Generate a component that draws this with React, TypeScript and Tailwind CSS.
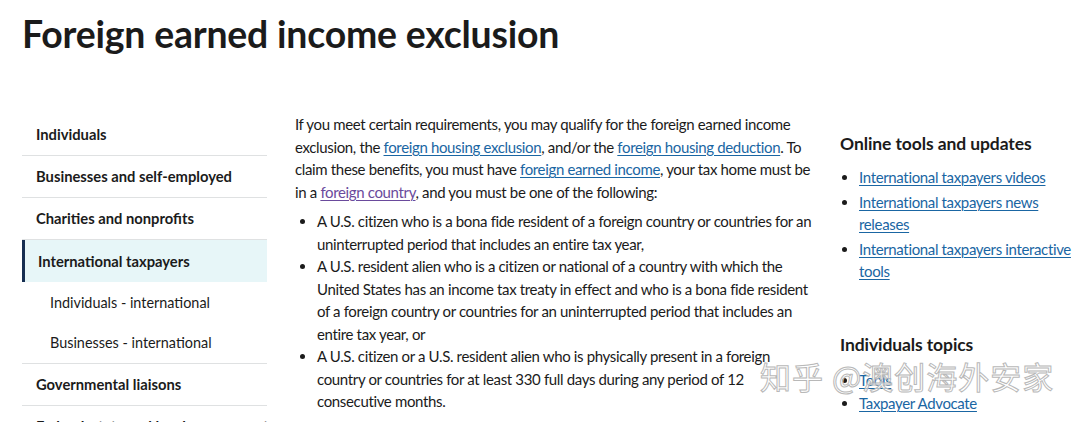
import React from "react";

const font = { fontFamily: "Lato, 'Noto Sans', sans-serif" };

const navItems = [
  { label: "Individuals" },
  { label: "Businesses and self-employed" },
  { label: "Charities and nonprofits" },
  { label: "International taxpayers", active: true },
  { label: "Individuals - international", sub: true },
  { label: "Businesses - international", sub: true, last: true },
  { label: "Governmental liaisons" },
  { label: "Federal, state and local governments" },
];

function A({ children, visited }: { children: React.ReactNode; visited?: boolean }) {
  return (
    <a
      href="#"
      className={`underline underline-offset-2 decoration-1 ${
        visited ? "text-[#6a4a9c]" : "text-[#1a66a3]"
      }`}
    >
      {children}
    </a>
  );
}

function SideNav() {
  return (
    <nav className="w-[245px] shrink-0">
      {navItems.map((it, i) => {
        if (it.sub) {
          return (
            <div
              key={i}
              className={`h-[41px] flex items-center pl-[28px] text-[14.4px] text-[#1b1b1b] whitespace-nowrap ${
                it.last ? "border-b border-[#dfe1e2]" : ""
              }`}
            >
              {it.label}
            </div>
          );
        }
        return (
          <div
            key={i}
            className={`h-[42px] flex items-center text-[14.75px] font-bold text-[#1b1b1b] whitespace-nowrap ${
              it.active
                ? "bg-[#e7f6f8] border-l-[3px] border-[#162e51] pl-[13px]"
                : "pl-[14px] border-b border-[#dfe1e2]"
            }`}
          >
            {it.label}
          </div>
        );
      })}
    </nav>
  );
}

export default function App() {
  return (
    <div className="relative w-[1080px] h-[422px] overflow-hidden bg-white text-[#1b1b1b]" style={font}>
      <h1 className="pl-[22px] pt-[11px] text-[37.4px] leading-[46px] font-bold tracking-[-0.2px]">
        Foreign earned income exclusion
      </h1>

      <div className="flex pl-[22px] pt-[57px]">
        <SideNav />

        <main className="ml-[28px] -mt-[1px] w-[520px] text-[15px] leading-[22.5px] tracking-[-0.35px]">
          <p>
            If you meet certain requirements, you may qualify for the foreign earned income exclusion, the{" "}
            <A>foreign housing exclusion</A>, and/or the <A>foreign housing deduction</A>. To claim these
            benefits, you must have <A>foreign earned income</A>, your tax home must be in a{" "}
            <A visited>foreign country</A>, and you must be one of the following:
          </p>
          <ul className="mt-[7px] pl-[22px] list-disc">
            <li>
              A U.S. citizen who is a bona fide resident of a foreign country or countries for an uninterrupted
              period that includes an entire tax year,
            </li>
            <li>
              A U.S. resident alien who is a citizen or national of a country with which the United States has an
              income tax treaty in effect and who is a bona fide resident of a foreign country or countries for an
              uninterrupted period that includes an entire tax year, or
            </li>
            <li>
              A U.S. citizen or a U.S. resident alien who is physically present in a foreign country or countries
              for at least 330 full days during any period of 12 consecutive months.
            </li>
          </ul>
        </main>

        <aside className="ml-[25px] w-[240px] pt-[19px]">
          <h2 className="text-[17.5px] font-bold leading-[22px] tracking-[-0.1px]">Online tools and updates</h2>
          <ul className="mt-[11px] pl-[19px] list-disc text-[15px] leading-[22.5px] tracking-[-0.35px] space-y-[2px]">
            <li><A>International taxpayers videos</A></li>
            <li><A>International taxpayers news releases</A></li>
            <li><A>International taxpayers interactive tools</A></li>
          </ul>
          <h2 className="mt-[51px] text-[17.5px] font-bold leading-[22px] tracking-[-0.1px]">Individuals topics</h2>
          <ul className="mt-[13px] pl-[19px] list-disc text-[15px] leading-[22.5px] tracking-[-0.35px] space-y-[1px]">
            <li><A>Tools</A></li>
            <li><A>Taxpayer Advocate</A></li>
          </ul>
        </aside>
      </div>

      <div
        className="absolute left-[760px] top-[355px] text-[31px] leading-[42px] text-white/60 [-webkit-text-stroke:1px_#b8b8b8] tracking-[1px]"
        style={{ fontFamily: "'Noto Sans CJK SC', 'Noto Sans', sans-serif" }}
      >
        知乎 @澳创海外安家
      </div>
    </div>
  );
}
